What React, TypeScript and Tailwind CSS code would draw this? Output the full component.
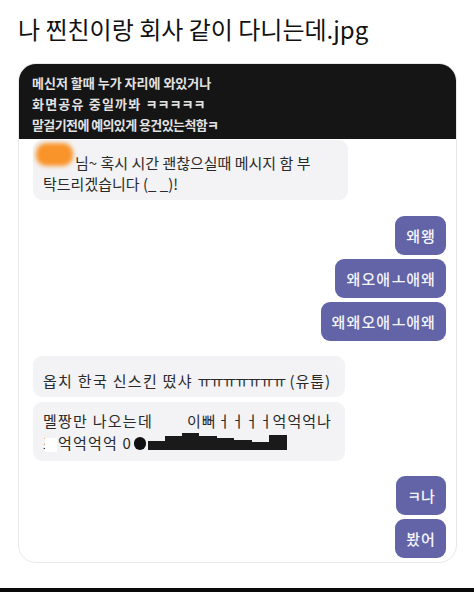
import React from "react";

const font = { fontFamily: '"Noto Sans CJK KR", "Noto Sans", sans-serif' };

function J({ c, n, w }: { c: string; n: number; w: string }) {
  return (
    <>
      {Array.from({ length: n }).map((_, i) => (
        <span key={i} className={`inline-block text-center tracking-normal ${w}`}>
          {c}
        </span>
      ))}
    </>
  );
}

function Purple({ children, mt }: { children: React.ReactNode; mt: string }) {
  return (
    <div className={`flex justify-end ${mt}`}>
      <div className="whitespace-nowrap rounded-[9px] bg-[#6264a7] pl-[11px] pr-[10px] py-[9px] text-[15px] font-medium leading-[21px] tracking-[1.1px] text-[#f4f4fa]">
        {children}
      </div>
    </div>
  );
}

export default function App() {
  return (
    <div className="h-[592px] w-[474px] overflow-hidden bg-white flex flex-col" style={font}>
      <div className="pl-[18px] pt-[13px] text-[24px] leading-[32px] text-[#111]">
        나 찐친이랑 회사 같이 다니는데.jpg
      </div>

      <div className="ml-[18px] mr-[17px] mt-[18px] overflow-hidden rounded-[18px] border border-[#e8e8e8] bg-white">
        <div className="h-[75px] bg-[#151515] pl-[13px] pt-[8px] text-[13px] font-semibold leading-[21px] text-[#e2e2e2]">
          <div>메신저 할때 누가 자리에 와있거나</div>
          <div className="whitespace-nowrap">
            <span className="tracking-[1.2px]">화면공유 중일까봐 </span>
            <J c="ㅋ" n={5} w="w-[12px]" />
          </div>
          <div className="tracking-[-0.6px]">말걸기전에 예의있게 용건있는척함ㅋ</div>
        </div>

        <div className="flex flex-col pl-[14px] pr-[10px] pb-[4px] pt-[1px]">
          <div className="relative w-[315px] rounded-[9px] bg-[#f3f2f4] pl-[10px] pr-[8px] pt-[12px] pb-[6px] text-[15px] leading-[21px] text-[#2a2a2a]">
            <div className="absolute left-[3px] top-[3px] h-[23px] w-[37px] rounded-[10px] bg-[#f9942a] blur-[2px]" />
            <div className="indent-[32px]">님~ 혹시 시간 괜찮으실때 메시지 함 부</div>
            <div>탁드리겠습니다 (_ _)!</div>
          </div>

          <Purple mt="mt-[16px]">왜왱</Purple>
          <Purple mt="mt-[4px]">
            왜오애<J c="ㅗ" n={1} w="w-[15px]" />애왜
          </Purple>
          <Purple mt="mt-[4px]">
            왜왜오애<J c="ㅗ" n={1} w="w-[15px]" />애왜
          </Purple>

          <div className="mt-[15px] w-[312px] whitespace-nowrap rounded-[9px] bg-[#f3f2f4] pl-[10px] pt-[14px] pb-[6px] text-[15px] leading-[21px] text-[#2a2a2a]">
            <span className="tracking-[1.3px]">옵치 한국 신스킨 떴샤 </span>
            <J c="ㅠ" n={7} w="w-[12.5px]" />
            <span className="tracking-[1px]"> (유툽)</span>
          </div>

          <div className="mt-[5px] w-[312px] rounded-[9px] bg-[#f3f2f4] pl-[10px] pt-[8px] pb-[7px] text-[15px] leading-[22px] text-[#2a2a2a]">
            <div className="flex items-center whitespace-nowrap">
              <span className="tracking-[1.25px]">멜짱만 나오는데</span>
              <span className="inline-block w-[34px]" />
              <span className="tracking-[1px]">
                이뻐<J c="ㅓ" n={4} w="w-[14px]" />억억억나
              </span>
            </div>
            <div className="flex items-end whitespace-nowrap tracking-[1.2px]">
              <span className="relative">
                조
                <span className="absolute left-[2px] top-[6px] h-[14px] w-[12px] bg-white" />
              </span>
              <span>억억억억 0</span>
              <span className="mb-[4px] ml-[2px] h-[13px] w-[12px] rounded-full bg-[#111]" />
              <span className="mb-[4px] ml-[2px] flex items-end">
                <span className="h-[9px] w-[17px] bg-[#1a1a1a]" />
                <span className="h-[14px] w-[17px] bg-[#1a1a1a]" />
                <span className="h-[17px] w-[17px] bg-[#1a1a1a]" />
                <span className="h-[14px] w-[18px] bg-[#1a1a1a]" />
                <span className="h-[12px] w-[17px] bg-[#1a1a1a]" />
                <span className="h-[10px] w-[18px] bg-[#1a1a1a]" />
                <span className="h-[8px] w-[17px] bg-[#1a1a1a]" />
                <span className="h-[15px] w-[18px] bg-[#1a1a1a]" />
              </span>
            </div>
          </div>

          <Purple mt="mt-[15px]">
            <J c="ㅋ" n={1} w="w-[14px]" />나
          </Purple>
          <Purple mt="mt-[4px]">봤어</Purple>
        </div>
      </div>

      <div className="mt-auto h-[4px] bg-[#0a0a0a]" />
    </div>
  );
}
